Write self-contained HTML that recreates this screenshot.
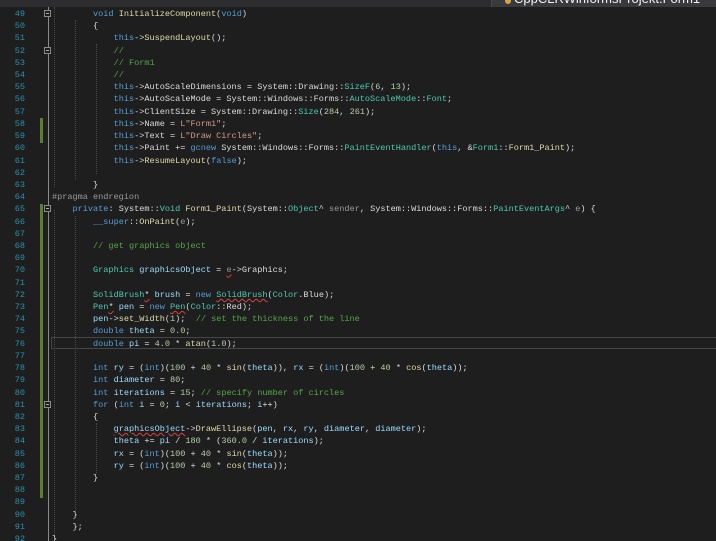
<!DOCTYPE html>
<html><head><meta charset="utf-8"><style>
html,body{margin:0;padding:0;background:#1e1e1e;width:716px;height:541px;overflow:hidden;position:relative}
#top{position:absolute;left:0;top:0;width:716px;height:7px;background:#2d2d30}
#tab{position:absolute;left:491px;top:0;width:225px;height:7px;background:#3a3a3d;border-left:1px solid #4a4a4a;overflow:hidden}
#tab span{position:absolute;left:22px;top:-9px;font:13px "Liberation Sans",sans-serif;color:#f1f1f1;white-space:nowrap}
#tab i{position:absolute;left:13px;top:0;width:6px;height:4px;background:#d6a04a;border-radius:0 0 3px 3px}
.ln{position:absolute;left:0;width:25px;text-align:right;font:8.56px "Liberation Mono",monospace;color:#2b91af;height:12.21px;line-height:12.21px}
.cl{position:absolute;left:52px;white-space:pre;font:8.56px "Liberation Mono",monospace;color:#dcdcdc;height:12.21px;line-height:12.21px}
.k{color:#569cd6}.f{color:#dcdcaa}.t{color:#4ec9b0}.s{color:#d69d85}.c{color:#57a64a}.n{color:#b5cea8}.v{color:#9cdcfe}.p{color:#9a9a9a}.m{color:#9b9b9b}
.sq{text-decoration:underline wavy #e04040;text-decoration-thickness:1px}
.bar{position:absolute;left:40px;width:3px;background:#5b7f2d}
.gut{position:absolute;left:48px;top:7px;width:1px;height:534px;background:#8a8a8a}
.guide{position:absolute;width:0;border-left:1px dotted #4a4a4a}
.fold{position:absolute;left:44px;width:7px;height:7px;border:1px solid #8a8a8a;background:#1e1e1e;box-sizing:border-box}
.fold:after{content:"";position:absolute;left:1px;top:2px;width:3px;height:1px;background:#aaa}
#cur{position:absolute;left:51px;top:336.5px;width:665px;height:12px;border:1px solid #464646;border-right:none;box-sizing:border-box}
</style></head><body>
<div id="top"></div><div id="tab"><i></i><span>CppCLRWinformsProjekt.Form1</span></div>
<div class="gut"></div>
<div class="guide" style="left:54px;top:7px;height:180px"></div>
<div class="guide" style="left:54px;top:210px;height:331px"></div>
<div class="guide" style="left:75px;top:20px;height:160px"></div>
<div class="guide" style="left:75px;top:216px;height:295px"></div>
<div class="guide" style="left:96px;top:44px;height:130px"></div>
<div class="guide" style="left:96px;top:423px;height:50px"></div>
<div class="bar" style="top:118px;height:25px"></div>
<div class="bar" style="top:204px;height:294px"></div>
<div id="cur"></div>
<div id="code"></div>
<script>
var L=[
[49,'        <span class="k">void</span> <span class="f">InitializeComponent</span>(<span class="k">void</span>)'],
[50,'        {'],
[51,'            <span class="k">this</span>-&gt;<span class="f">SuspendLayout</span>();'],
[52,'            <span class="c">//</span>'],
[53,'            <span class="c">// Form1</span>'],
[54,'            <span class="c">//</span>'],
[55,'            <span class="k">this</span>-&gt;AutoScaleDimensions = System::Drawing::<span class="t">SizeF</span>(<span class="n">6</span>, <span class="n">13</span>);'],
[56,'            <span class="k">this</span>-&gt;AutoScaleMode = System::Windows::Forms::<span class="t">AutoScaleMode</span>::<span class="t">Font</span>;'],
[57,'            <span class="k">this</span>-&gt;ClientSize = System::Drawing::<span class="t">Size</span>(<span class="n">284</span>, <span class="n">261</span>);'],
[58,'            <span class="k">this</span>-&gt;Name = <span class="s">L"Form1"</span>;'],
[59,'            <span class="k">this</span>-&gt;Text = <span class="s">L"Draw Circles"</span>;'],
[60,'            <span class="k">this</span>-&gt;Paint += <span class="k">gcnew</span> System::Windows::Forms::<span class="t">PaintEventHandler</span>(<span class="k">this</span>, &amp;<span class="t">Form1</span>::<span class="f">Form1_Paint</span>);'],
[61,'            <span class="k">this</span>-&gt;<span class="f">ResumeLayout</span>(<span class="k">false</span>);'],
[62,''],
[63,'        }'],
[64,'<span class="m">#pragma endregion</span>'],
[65,'    <span class="k">private</span>: System::<span class="t">Void</span> <span class="f">Form1_Paint</span>(System::<span class="t">Object</span>^ <span class="p">sender</span>, System::Windows::Forms::<span class="t">PaintEventArgs</span>^ <span class="p">e</span>) {'],
[66,'        <span class="k">__super</span>::<span class="f">OnPaint</span>(<span class="p">e</span>);'],
[67,''],
[68,'        <span class="c">// get graphics object</span>'],
[69,''],
[70,'        <span class="t">Graphics</span> <span class="v">graphicsObject</span> = <span class="p sq">e</span>-&gt;Graphics;'],
[71,''],
[72,'        <span class="t">SolidBrush</span><span class="sq">*</span> <span class="v">brush</span> = <span class="k">new</span> <span class="t sq">SolidBrush</span>(<span class="t">Color</span>.Blue);'],
[73,'        <span class="t">Pen</span><span class="sq">*</span> <span class="v">pen</span> = <span class="k">new</span> <span class="t sq">Pen</span>(<span class="t">Color</span>::Red);'],
[74,'        <span class="v">pen</span>-&gt;<span class="f">set_Width</span>(<span class="n">1</span>);  <span class="c">// set the thickness of the line</span>'],
[75,'        <span class="k">double</span> <span class="v">theta</span> = <span class="n">0.0</span>;'],
[76,'        <span class="k">double</span> <span class="v">pi</span> = <span class="n">4.0</span> * <span class="f">atan</span>(<span class="n">1.0</span>);'],
[77,''],
[78,'        <span class="k">int</span> <span class="v">ry</span> = (<span class="k">int</span>)(<span class="n">100</span> + <span class="n">40</span> * <span class="f">sin</span>(<span class="v">theta</span>)), <span class="v">rx</span> = (<span class="k">int</span>)(<span class="n">100</span> + <span class="n">40</span> * <span class="f">cos</span>(<span class="v">theta</span>));'],
[79,'        <span class="k">int</span> <span class="v">diameter</span> = <span class="n">80</span>;'],
[80,'        <span class="k">int</span> <span class="v">iterations</span> = <span class="n">15</span>; <span class="c">// specify number of circles</span>'],
[81,'        <span class="k">for</span> (<span class="k">int</span> <span class="v">i</span> = <span class="n">0</span>; <span class="v">i</span> &lt; <span class="v">iterations</span>; <span class="v">i</span>++)'],
[82,'        {'],
[83,'            <span class="v sq">graphicsObject</span>-&gt;<span class="f">DrawEllipse</span>(<span class="v">pen</span>, <span class="v">rx</span>, <span class="v">ry</span>, <span class="v">diameter</span>, <span class="v">diameter</span>);'],
[84,'            <span class="v">theta</span> += <span class="v">pi</span> / <span class="n">180</span> * (<span class="n">360.0</span> / <span class="v">iterations</span>);'],
[85,'            <span class="v">rx</span> = (<span class="k">int</span>)(<span class="n">100</span> + <span class="n">40</span> * <span class="f">sin</span>(<span class="v">theta</span>));'],
[86,'            <span class="v">ry</span> = (<span class="k">int</span>)(<span class="n">100</span> + <span class="n">40</span> * <span class="f">cos</span>(<span class="v">theta</span>));'],
[87,'        }'],
[88,''],
[89,''],
[90,'    }'],
[91,'    };'],
[92,'}']
];
var h='';
for(var j=0;j<L.length;j++){var y=8+j*12.21;
h+='<div class="ln" style="top:'+y+'px">'+L[j][0]+'</div><div class="cl" style="top:'+y+'px">'+L[j][1]+'</div>';}
[49,52,65,81].forEach(function(n){h+='<div class="fold" style="top:'+(10+(n-49)*12.21)+'px"></div>';});
document.getElementById('code').innerHTML=h;
</script>
</body></html>
